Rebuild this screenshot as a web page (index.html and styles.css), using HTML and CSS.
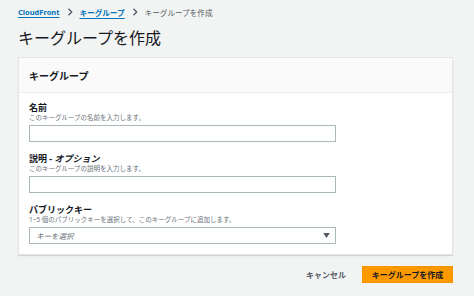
FILE: index.html
```html
<!DOCTYPE html>
<html lang="ja">
<head>
<meta charset="utf-8">
<link rel="stylesheet" href="styles.css">
</head>
<body>
<div class="page">
  <nav class="crumbs">
    <a class="crumb-link latin">CloudFront</a>
    <svg class="chev" viewBox="0 0 8 8" width="8" height="8"><path d="M2.5 0.8 L5.7 4 L2.5 7.2" fill="none" stroke="#545b64" stroke-width="1.3"/></svg>
    <a class="crumb-link">キーグループ</a>
    <svg class="chev" viewBox="0 0 8 8" width="8" height="8"><path d="M2.5 0.8 L5.7 4 L2.5 7.2" fill="none" stroke="#545b64" stroke-width="1.3"/></svg>
    <span class="crumb-current">キーグループを作成</span>
  </nav>
  <h1 class="title">キーグループを作成</h1>
  <section class="card">
    <div class="card-head">キーグループ</div>
    <div class="card-body">
      <div class="field">
        <div class="label">名前</div>
        <div class="desc">このキーグループの名前を入力します。</div>
        <div class="input"></div>
      </div>
      <div class="field">
        <div class="label">説明 - <i>オプション</i></div>
        <div class="desc">このキーグループの説明を入力します。</div>
        <div class="input"></div>
      </div>
      <div class="field">
        <div class="label">パブリックキー</div>
        <div class="desc">1~5 個のパブリックキーを選択して、このキーグループに追加します。</div>
        <div class="input select"><span class="placeholder">キーを選択</span><svg class="caret" viewBox="0 0 8 6" width="7" height="5"><path d="M0 0 H8 L4 6 Z" fill="#545b64"/></svg></div>
      </div>
    </div>
  </section>
  <div class="actions">
    <span class="cancel">キャンセル</span>
    <span class="primary">キーグループを作成</span>
  </div>
</div>
</body>
</html>
```

FILE: styles.css
```css
html, body {
  margin: 0;
  padding: 0;
  background: #f2f3f3;
}
body {
  font-family: "Noto Sans", "Noto Sans CJK JP", sans-serif;
  color: #16191f;
  width: 474px;
  height: 296px;
  overflow: hidden;
}
.page {
  padding: 5px 21px 0 18px;
}
.crumbs {
  display: flex;
  align-items: center;
  gap: 5px;
  height: 14px;
  font-size: 7.6px;
}
.crumb-link {
  color: #0073bb;
  font-weight: 700;
  text-decoration: underline;
  text-underline-offset: 2px;
}
.latin {
  font-size: 7.5px;
}
.chev {
  display: block;
  margin: 0 1px;
}
.crumb-current {
  color: #545b64;
}
.title {
  margin: 8px 0 0;
  font-size: 16px;
  font-weight: 400;
  line-height: 22px;
  height: 30px;
}
.card {
  background: #fff;
  border: 1px solid #e4e6e6;
  box-shadow: 0 1px 1px rgba(0,0,0,0.12);
  margin-top: 0;
}
.card-head {
  background: #fafafa;
  border-bottom: 1px solid #eaeded;
  height: 34px;
  padding-left: 10px;
  display: flex;
  align-items: center;
  font-size: 10px;
  font-weight: 700;
}
.card-body {
  padding: 9px 10px 10px;
  display: flex;
  flex-direction: column;
  gap: 11px;
}
.field {
  display: flex;
  flex-direction: column;
}
.label {
  font-size: 9px;
  font-weight: 700;
  line-height: 11px;
}
.label i {
  font-style: italic;
}
.desc {
  font-size: 6.5px;
  color: #687078;
  line-height: 9px;
  margin-bottom: 3px;
}
.input {
  width: 305px;
  height: 15px;
  border: 1px solid #aab7b8;
  background: #fff;
}
.select {
  display: flex;
  align-items: center;
  justify-content: space-between;
  padding: 0 5px 0 6px;
  width: 294px;
}
.placeholder {
  font-size: 7.5px;
  font-style: italic;
  color: #687078;
}
.actions {
  display: flex;
  justify-content: flex-end;
  align-items: center;
  gap: 16px;
  margin-top: 11px;
}
.cancel {
  font-size: 8px;
  font-weight: 700;
  color: #545b64;
}
.primary {
  background: #ff9900;
  border: 1px solid #f59300;
  color: #16191f;
  font-size: 8px;
  font-weight: 700;
  height: 15px;
  width: 89px;
  display: flex;
  align-items: center;
  justify-content: center;
}
```
